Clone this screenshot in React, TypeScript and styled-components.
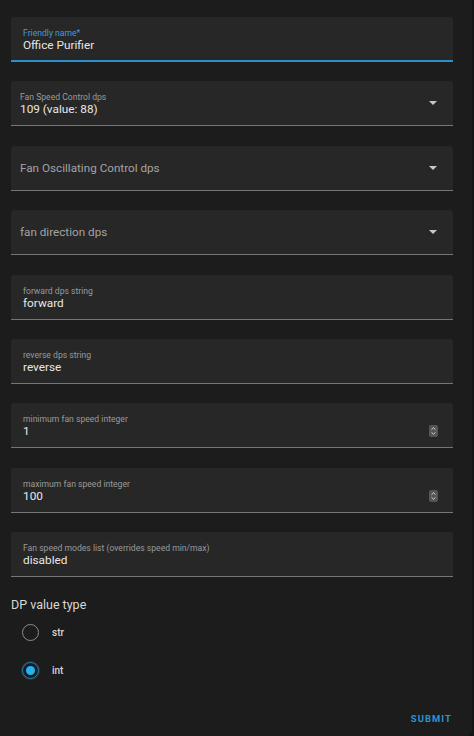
import React from "react";
import styled, { createGlobalStyle } from "styled-components";

const Global = createGlobalStyle`
  html, body { margin: 0; padding: 0; background: #121212; }
  body { font-family: Roboto, "Noto Sans", "Liberation Sans", sans-serif; }
  * { box-sizing: border-box; }
`;

const Page = styled.div`
  display: flex;
  width: 474px;
  height: 736px;
  background: #121212;
  overflow: hidden;
`;

const Dialog = styled.div`
  width: 472px;
  height: 736px;
  background: #1c1c1c;
  padding: 17px 19px 0 11px;
  display: flex;
  flex-direction: column;
  border-bottom-right-radius: 6px;
`;

const EdgeStrip = styled.div`
  width: 2px;
  height: 736px;
  background: #151515;
`;

const Fields = styled.div`
  display: flex;
  flex-direction: column;
  gap: 19.4px;
`;

const Field = styled.div<{ $focused?: boolean; $pad: number; $center?: boolean }>`
  position: relative;
  height: 45px;
  background: #272727;
  border-top-left-radius: 3px;
  border-top-right-radius: 3px;
  border-bottom: ${(p) => (p.$focused ? "2px solid #2a8fcc" : "1px solid #767676")};
  padding: ${(p) => (p.$center ? "0" : "11px")} 30px 0 ${(p) => p.$pad}px;
  display: flex;
  flex-direction: column;
  justify-content: ${(p) => (p.$center ? "center" : "flex-start")};
`;

const Label = styled.div<{ $focused?: boolean }>`
  font-size: 8.6px;
  line-height: 10px;
  color: ${(p) => (p.$focused ? "#3d9fd8" : "#9a9a9a")};
  white-space: nowrap;
`;

const Value = styled.div`
  font-size: 11.8px;
  line-height: 14px;
  color: #e6e6e6;
  white-space: nowrap;
`;

const Placeholder = styled.div`
  font-size: 11.7px;
  line-height: 14px;
  color: #a3a3a3;
  white-space: nowrap;
`;

const Arrow = styled.div`
  position: absolute;
  right: 16px;
  top: 50%;
  margin-top: -2px;
  width: 0;
  height: 0;
  border-left: 4px solid transparent;
  border-right: 4px solid transparent;
  border-top: 4px solid #c8c8c8;
`;

const Spinner = styled.div`
  position: absolute;
  right: 15px;
  top: 22px;
  width: 9px;
  height: 12px;
  border-radius: 2px;
  background: #555;
  display: flex;
  align-items: center;
  justify-content: center;
`;

const Section = styled.div`
  margin-top: 21px;
  font-size: 12.5px;
  line-height: 14px;
  color: #d8d8d8;
  font-weight: 400;
`;

const RadioList = styled.div`
  display: flex;
  flex-direction: column;
  gap: 21px;
  margin-top: 12px;
  padding-left: 11px;
`;

const RadioRow = styled.label`
  display: flex;
  align-items: center;
  height: 17px;
  gap: 13px;
`;

const Ring = styled.div<{ $checked?: boolean }>`
  width: 17px;
  height: 17px;
  border-radius: 50%;
  border: 1.6px solid ${(p) => (p.$checked ? "#1f86c2" : "#8c8c8c")};
  display: flex;
  align-items: center;
  justify-content: center;
  box-shadow: ${(p) => (p.$checked ? "0 0 0 1px rgba(31,134,194,0.25)" : "none")};
`;

const Dot = styled.div`
  width: 9px;
  height: 9px;
  border-radius: 50%;
  background: #22b3f2;
`;

const RadioLabel = styled.span`
  font-size: 10px;
  color: #d6d6d6;
  font-weight: 500;
`;

const Actions = styled.div`
  display: flex;
  justify-content: flex-end;
  margin-top: 34px;
  padding-right: 1px;
`;

const SubmitButton = styled.button`
  background: none;
  border: none;
  padding: 0;
  font-family: inherit;
  font-size: 9.4px;
  font-weight: 700;
  letter-spacing: 1.1px;
  color: #2a96d3;
  line-height: 12px;
`;

const SpinIcon = () => (
  <svg width="7" height="10" viewBox="0 0 7 10">
    <path d="M1.5 3.6 L3.5 1.8 L5.5 3.6" fill="none" stroke="#d0d0d0" strokeWidth="1" />
    <path d="M1.5 6.4 L3.5 8.2 L5.5 6.4" fill="none" stroke="#d0d0d0" strokeWidth="1" />
  </svg>
);

type F =
  | { kind: "text"; label: string; value: string; focused?: boolean; number?: boolean }
  | { kind: "select"; label: string; value?: string };

const fields: F[] = [
  { kind: "text", label: "Friendly name*", value: "Office Purifier", focused: true },
  { kind: "select", label: "Fan Speed Control dps", value: "109 (value: 88)" },
  { kind: "select", label: "Fan Oscillating Control dps" },
  { kind: "select", label: "fan direction dps" },
  { kind: "text", label: "forward dps string", value: "forward" },
  { kind: "text", label: "reverse dps string", value: "reverse" },
  { kind: "text", label: "minimum fan speed integer", value: "1", number: true },
  { kind: "text", label: "maximum fan speed integer", value: "100", number: true },
  { kind: "text", label: "Fan speed modes list (overrides speed min/max)", value: "disabled" },
];

export default function App() {
  return (
    <>
      <Global />
      <Page>
        <Dialog>
          <Fields>
            {fields.map((f, i) =>
              f.kind === "text" ? (
                <Field key={i} $pad={12} $focused={f.focused}>
                  <Label $focused={f.focused}>{f.label}</Label>
                  <Value>{f.value}</Value>
                  {f.number && (
                    <Spinner>
                      <SpinIcon />
                    </Spinner>
                  )}
                </Field>
              ) : f.value ? (
                <Field key={i} $pad={9}>
                  <Label>{f.label}</Label>
                  <Value>{f.value}</Value>
                  <Arrow />
                </Field>
              ) : (
                <Field key={i} $pad={9} $center>
                  <Placeholder>{f.label}</Placeholder>
                  <Arrow />
                </Field>
              )
            )}
          </Fields>
          <Section>DP value type</Section>
          <RadioList>
            <RadioRow>
              <Ring />
              <RadioLabel>str</RadioLabel>
            </RadioRow>
            <RadioRow>
              <Ring $checked>
                <Dot />
              </Ring>
              <RadioLabel>int</RadioLabel>
            </RadioRow>
          </RadioList>
          <Actions>
            <SubmitButton>SUBMIT</SubmitButton>
          </Actions>
        </Dialog>
        <EdgeStrip />
      </Page>
    </>
  );
}
